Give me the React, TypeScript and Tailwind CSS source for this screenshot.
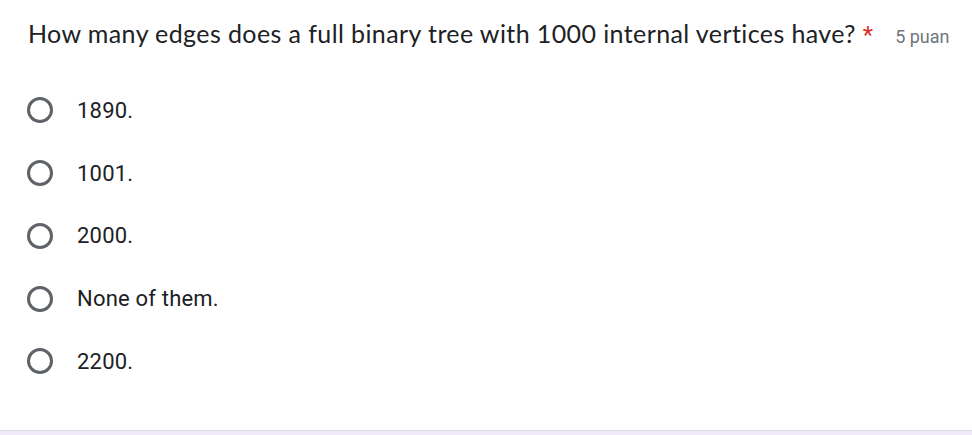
import React from "react";

const options = ["1890.", "1001.", "2000.", "None of them.", "2200."];

export default function App() {
  return (
    <div className="w-[972px] h-[435px] bg-[#f0ebf8]">
      <div className="h-[431px] bg-white border-b border-[#dadce0]">
        <div className="flex items-baseline pl-[28px] pt-[16px]">
          <div
            className="text-[25px] leading-[34px] tracking-[0.4px] text-[#202124]"
            style={{ fontFamily: "Lato, 'Noto Sans', sans-serif" }}
          >
            How many edges does a full binary tree with 1000 internal vertices have?
          </div>
          <span
            className="ml-[7px] text-[24px] leading-[32px] text-[#d93025]"
            style={{ fontFamily: "Roboto, sans-serif" }}
          >
            *
          </span>
          <span
            className="ml-[22px] text-[18px] text-[#70757a]"
            style={{ fontFamily: "Roboto, sans-serif" }}
          >
            5 puan
          </span>
        </div>
        <div className="pt-[28px] flex flex-col">
          {options.map((o) => (
            <div key={o} className="h-[62.75px] flex items-center pl-[27px]">
              <div className="w-[26px] h-[26px] rounded-full border-[3px] border-[#5f6368] shrink-0" />
              <span
                className="ml-[24px] text-[22px] tracking-[0.2px] text-[#202124]"
                style={{ fontFamily: "Roboto, sans-serif" }}
              >
                {o}
              </span>
            </div>
          ))}
        </div>
      </div>
    </div>
  );
}
